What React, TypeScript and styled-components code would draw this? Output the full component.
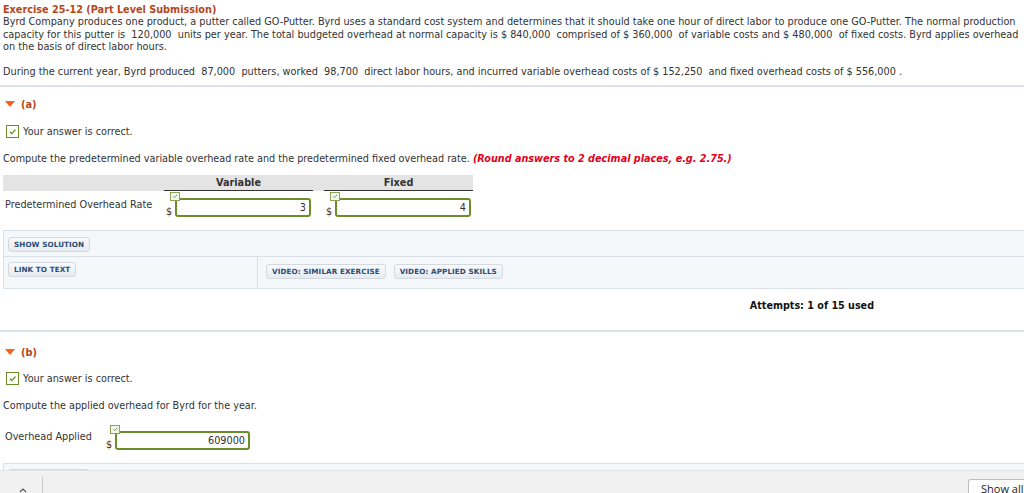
import React from "react";
import styled, { createGlobalStyle } from "styled-components";

const Global = createGlobalStyle`
  html, body { margin: 0; padding: 0; background: #fff; }
  body { font-family: "DejaVu Sans", Verdana, sans-serif; font-size: 9.7px; color: #333; }
  * { box-sizing: border-box; }
`;

const Page = styled.div`
  padding: 3px 0 40px 3px;
  display: flex;
  flex-direction: column;
`;

const Title = styled.div`
  font-weight: bold;
  color: #b5461c;
  font-size: 9.7px;
  line-height: 13px;
`;

const Para = styled.p<{ $mb: number }>`
  margin: 0 0 ${(p) => p.$mb}px 0;
  line-height: 12.5px;
  font-size: 9.72px;
  padding-right: 4px;
`;

const Rule = styled.div`
  height: 2px;
  background: #dbe2ea;
  margin-left: -3px;
`;

const PartHeader = styled.div<{ $top: number }>`
  display: flex;
  align-items: center;
  gap: 6px;
  font-weight: bold;
  color: #b5461c;
  font-size: 9.8px;
  height: 14px;
  margin-top: ${(p) => p.$top}px;
  padding-left: 2px;
`;

const Triangle = styled.span`
  width: 0;
  height: 0;
  border-left: 5px solid transparent;
  border-right: 5px solid transparent;
  border-top: 6px solid #f0641e;
`;

const Correct = styled.div<{ $top: number }>`
  display: flex;
  align-items: center;
  gap: 4px;
  margin-top: ${(p) => p.$top}px;
  padding-left: 3px;
  font-size: 9.7px;
  height: 13px;
`;

const CheckBox = styled.span<{ $size: number }>`
  width: ${(p) => p.$size}px;
  height: ${(p) => p.$size}px;
  border: 1px solid #6b8e2a;
  background: #fff;
  display: inline-flex;
  align-items: center;
  justify-content: center;
  flex: none;
`;

const Check = ({ size }: { size: number }) => (
  <svg width={size * 0.7} height={size * 0.7} viewBox="0 0 10 10">
    <path d="M2 5.2 L4.2 7.3 L8.2 2.8" fill="none" stroke="#6b8e2a" strokeWidth="1.4" />
  </svg>
);

const Question = styled.div<{ $top: number }>`
  margin-top: ${(p) => p.$top}px;
  font-size: 9.67px;
  line-height: 13px;
`;

const Hint = styled.span`
  color: #e3001b;
  font-weight: bold;
  font-style: italic;
`;

const Grid = styled.div<{ $cols: string; $top: number }>`
  display: grid;
  grid-template-columns: ${(p) => p.$cols};
  margin-top: ${(p) => p.$top}px;
  align-items: start;
`;

const HeadCell = styled.div<{ $col?: boolean }>`
  background: #e4e4e4;
  height: 16px;
  font-weight: bold;
  font-size: 9.7px;
  text-align: center;
  line-height: 15px;
  border-bottom: 1px solid ${(p) => (p.$col ? "#333" : "#e4e4e4")};
`;

const LabelCell = styled.div<{ $top: number }>`
  font-size: 9.7px;
  line-height: 13px;
  white-space: nowrap;
  padding: ${(p) => p.$top}px 0 0 2px;
`;

const InputCell = styled.div<{ $top: number }>`
  position: relative;
  display: flex;
  align-items: flex-end;
  gap: 3px;
  padding-top: ${(p) => p.$top}px;
  padding-left: 2px;
`;

const Dollar = styled.span`
  font-size: 9.7px;
  line-height: 10px;
  width: 6px;
`;

const Field = styled.div<{ $w: number }>`
  width: ${(p) => p.$w}px;
  height: 19px;
  border: 2px solid #6b8e2a;
  border-radius: 3px;
  background: #fff;
  text-align: right;
  font-size: 9.7px;
  line-height: 15px;
  padding-right: 3px;
`;

const Badge = styled.span<{ $top: number }>`
  position: absolute;
  top: ${(p) => p.$top}px;
  left: 6px;
  width: 10px;
  height: 9px;
  border: 1px solid #8aa35a;
  background: #f4f7ee;
  display: flex;
  align-items: center;
  justify-content: center;
`;

const ToolBox = styled.div<{ $top: number }>`
  margin-top: ${(p) => p.$top}px;
  background: #f5f8fb;
  border: 1px solid #d9e0e8;
  border-right: none;
  display: flex;
  flex-direction: column;
`;

const ToolRow = styled.div`
  display: flex;
  border-bottom: 1px solid #d9e0e8;
  &:last-child { border-bottom: none; }
`;

const ToolCell = styled.div<{ $w?: number; $h: number; $pt: number; $pl?: number }>`
  display: flex;
  gap: 8px;
  padding: ${(p) => p.$pt}px 4px 0 ${(p) => p.$pl ?? 4}px;
  height: ${(p) => p.$h}px;
  width: ${(p) => (p.$w ? `${p.$w}px` : "auto")};
  flex: ${(p) => (p.$w ? "none" : "1")};
  border-right: ${(p) => (p.$w ? "1px solid #d9e0e8" : "none")};
  align-items: flex-start;
`;

const Button = styled.button`
  font-family: "DejaVu Sans", Verdana, sans-serif;
  font-weight: bold;
  font-size: 7.2px;
  color: #2c4b74;
  background: linear-gradient(#f8fafc, #e7ebf0);
  border: 1px solid #d3d9e1;
  border-radius: 3px;
  height: 15px;
  padding: 0 5px;
  letter-spacing: 0.1px;
`;

const AttemptsRow = styled.div`
  display: flex;
  justify-content: flex-end;
  padding: 10px 150px 0 0;
  height: 41px;
`;

const Attempts = styled.div`
  font-weight: bold;
  font-size: 9.6px;
  line-height: 13px;
  color: #111;
`;

const DownloadBar = styled.div`
  position: fixed;
  left: 0;
  right: 0;
  bottom: 0;
  height: 23px;
  background: #f1f1f1;
  border-top: 1px solid #e2e2e2;
  display: flex;
  align-items: flex-end;
`;

const Chevron = styled.div`
  width: 43px;
  height: 16px;
  border-right: 1px solid #c8c8c8;
  display: flex;
  justify-content: center;
  padding-left: 4px;
  padding-top: 10px;
`;

const Spacer = styled.div`
  flex: 1;
`;

const ShowAll = styled.div`
  background: #fff;
  border: 1px solid #bdbdbd;
  border-right: none;
  border-bottom: none;
  border-radius: 3px 0 0 0;
  height: 14px;
  width: 56px;
  font-family: "Open Sans", "DejaVu Sans", sans-serif;
  font-size: 11px;
  line-height: 18px;
  padding-left: 12px;
  color: #222;
  overflow: hidden;
  white-space: nowrap;
`;

const InputGroup = ({ value, w, top }: { value: string; w: number; top: number }) => (
  <InputCell $top={top}>
    <Badge $top={top - 6}>
      <Check size={9} />
    </Badge>
    <Dollar>$</Dollar>
    <Field $w={w}>{value}</Field>
  </InputCell>
);

export default function App() {
  return (
    <>
      <Global />
      <Page>
        <Title>Exercise 25-12 (Part Level Submission)</Title>
        <Para $mb={12.5}>
          Byrd Company produces one product, a putter called GO-Putter. Byrd uses a standard cost system and determines that it should take one hour of direct labor to produce one GO-Putter. The normal production capacity for this putter is&nbsp; 120,000&nbsp; units per year. The total budgeted overhead at normal capacity is $ 840,000&nbsp; comprised of $ 360,000&nbsp; of variable costs and $ 480,000&nbsp; of fixed costs. Byrd applies overhead on the basis of direct labor hours.
        </Para>
        <Para $mb={6.5}>
          During the current year, Byrd produced&nbsp; 87,000&nbsp; putters, worked&nbsp; 98,700&nbsp; direct labor hours, and incurred variable overhead costs of $ 152,250&nbsp; and fixed overhead costs of $ 556,000 .
        </Para>
        <Rule />

        <PartHeader $top={10}>
          <Triangle />
          (a)
        </PartHeader>
        <Correct $top={14}>
          <CheckBox $size={13}>
            <Check size={13} />
          </CheckBox>
          Your answer is correct.
        </Correct>
        <Question $top={14}>
          Compute the predetermined variable overhead rate and the predetermined fixed overhead rate. <Hint>(Round answers to 2 decimal places, e.g. 2.75.)</Hint>
        </Question>
        <Grid $cols="161px 149px 11px 149px" $top={10}>
          <HeadCell />
          <HeadCell $col>Variable</HeadCell>
          <HeadCell />
          <HeadCell $col>Fixed</HeadCell>
          <LabelCell $top={7}>Predetermined Overhead Rate</LabelCell>
          <InputGroup value="3" w={136} top={7} />
          <span />
          <InputGroup value="4" w={136} top={7} />
        </Grid>
        <ToolBox $top={13}>
          <ToolRow>
            <ToolCell $h={25} $pt={6}>
              <Button>SHOW SOLUTION</Button>
            </ToolCell>
          </ToolRow>
          <ToolRow>
            <ToolCell $w={254} $h={31} $pt={5}>
              <Button>LINK TO TEXT</Button>
            </ToolCell>
            <ToolCell $h={31} $pt={7} $pl={8}>
              <Button>VIDEO: SIMILAR EXERCISE</Button>
              <Button>VIDEO: APPLIED SKILLS</Button>
            </ToolCell>
          </ToolRow>
        </ToolBox>
        <AttemptsRow>
          <Attempts>Attempts: 1 of 15 used</Attempts>
        </AttemptsRow>
        <Rule />

        <PartHeader $top={13}>
          <Triangle />
          (b)
        </PartHeader>
        <Correct $top={13}>
          <CheckBox $size={13}>
            <Check size={13} />
          </CheckBox>
          Your answer is correct.
        </Correct>
        <Question $top={14}>Compute the applied overhead for Byrd for the year.</Question>
        <Grid $cols="101px 150px" $top={10}>
          <LabelCell $top={8}>Overhead Applied</LabelCell>
          <InputGroup value="609000" w={135} top={8.5} />
        </Grid>
        <ToolBox $top={13}>
          <ToolRow>
            <ToolCell $h={30} $pt={5}>
              <Button>SHOW SOLUTION</Button>
            </ToolCell>
          </ToolRow>
        </ToolBox>
      </Page>
      <DownloadBar>
        <Chevron>
          <svg width="8" height="6" viewBox="0 0 8 6">
            <path d="M1 5 L4 2 L7 5" fill="none" stroke="#555" strokeWidth="1.2" />
          </svg>
        </Chevron>
        <Spacer />
        <ShowAll>Show all</ShowAll>
      </DownloadBar>
    </>
  );
}
